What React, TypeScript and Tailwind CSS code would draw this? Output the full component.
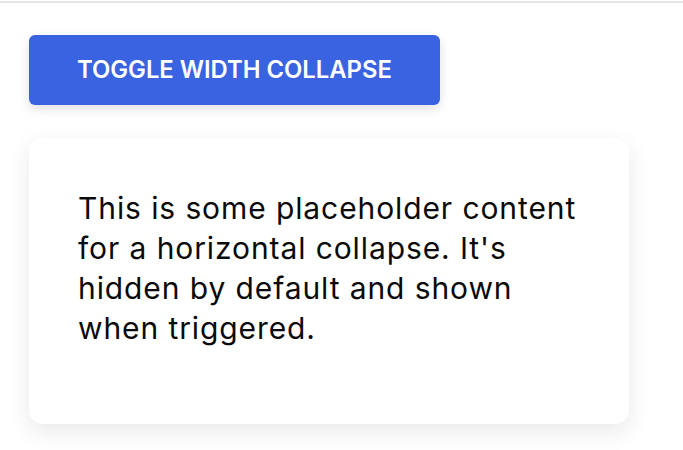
export default function App() {
  return (
    <div className="min-h-[450px] bg-white font-['Inter',sans-serif]">
      <div className="h-[1px]" />
      <div className="h-[2px] bg-[#e4e4e9]" />
      <div className="px-[29px] pt-[32px]">
        <button className="flex h-[70px] items-center rounded-[6px] bg-[#3a63e2] px-[48px] text-[23.8px] font-semibold uppercase text-white shadow-[0_4px_12px_rgba(0,0,0,0.12)]">
          Toggle width collapse
        </button>
        <div className="mt-[33px] w-[600px] rounded-[14px] bg-white px-[49px] pb-[76px] pt-[50px] shadow-[0_8px_24px_rgba(0,0,0,0.09)]">
          <p className="text-[30px] leading-[40px] tracking-[0.9px] text-[#0a0a0a]">
            This is some placeholder content for a horizontal collapse. It's hidden by default and shown when triggered.
          </p>
        </div>
      </div>
    </div>
  )
}
